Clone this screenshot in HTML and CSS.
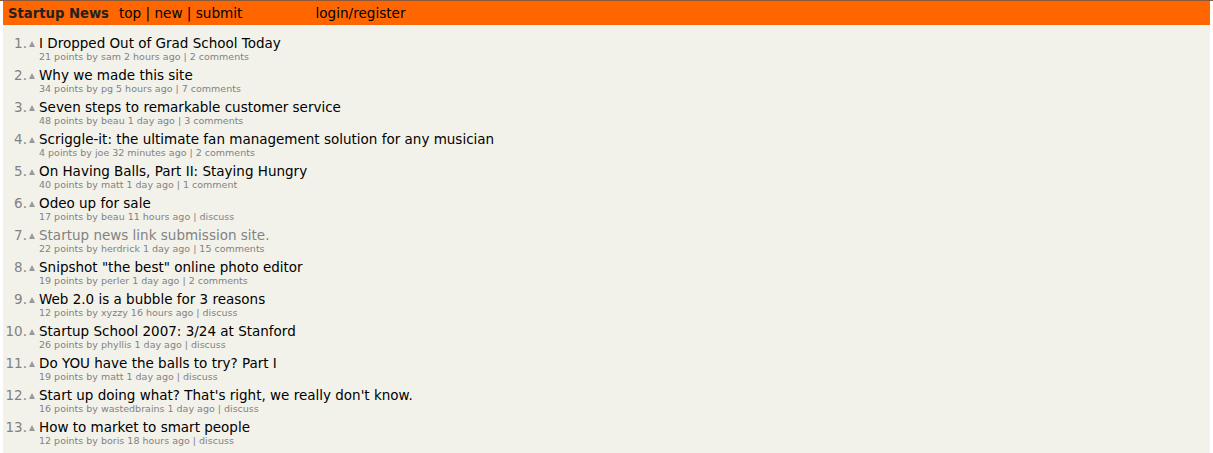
FILE: index.html
```html
<!DOCTYPE html>
<html>
<head>
<meta charset="utf-8">
<link rel="stylesheet" href="styles.css">
</head>
<body>
<div class="page">
  <div class="topbar">
    <span class="brand">Startup News</span>
    <span class="nav">top | new | submit</span>
    <span class="login">login/register</span>
  </div>
  <div class="list">
    <div class="item"><span class="rank">1.</span><span class="vote"></span><div class="body"><div class="title">I Dropped Out of Grad School Today</div><div class="sub">21 points by sam 2 hours ago | 2 comments</div></div></div>
    <div class="item"><span class="rank">2.</span><span class="vote"></span><div class="body"><div class="title">Why we made this site</div><div class="sub">34 points by pg 5 hours ago | 7 comments</div></div></div>
    <div class="item"><span class="rank">3.</span><span class="vote"></span><div class="body"><div class="title">Seven steps to remarkable customer service</div><div class="sub">48 points by beau 1 day ago | 3 comments</div></div></div>
    <div class="item"><span class="rank">4.</span><span class="vote"></span><div class="body"><div class="title">Scriggle-it: the ultimate fan management solution for any musician</div><div class="sub">4 points by joe 32 minutes ago | 2 comments</div></div></div>
    <div class="item"><span class="rank">5.</span><span class="vote"></span><div class="body"><div class="title">On Having Balls, Part II: Staying Hungry</div><div class="sub">40 points by matt 1 day ago | 1 comment</div></div></div>
    <div class="item"><span class="rank">6.</span><span class="vote"></span><div class="body"><div class="title">Odeo up for sale</div><div class="sub">17 points by beau 11 hours ago | discuss</div></div></div>
    <div class="item"><span class="rank">7.</span><span class="vote"></span><div class="body"><div class="title visited">Startup news link submission site.</div><div class="sub">22 points by herdrick 1 day ago | 15 comments</div></div></div>
    <div class="item"><span class="rank">8.</span><span class="vote"></span><div class="body"><div class="title">Snipshot "the best" online photo editor</div><div class="sub">19 points by perler 1 day ago | 2 comments</div></div></div>
    <div class="item"><span class="rank">9.</span><span class="vote"></span><div class="body"><div class="title">Web 2.0 is a bubble for 3 reasons</div><div class="sub">12 points by xyzzy 16 hours ago | discuss</div></div></div>
    <div class="item"><span class="rank">10.</span><span class="vote"></span><div class="body"><div class="title">Startup School 2007: 3/24 at Stanford</div><div class="sub">26 points by phyllis 1 day ago | discuss</div></div></div>
    <div class="item"><span class="rank">11.</span><span class="vote"></span><div class="body"><div class="title">Do YOU have the balls to try? Part I</div><div class="sub">19 points by matt 1 day ago | discuss</div></div></div>
    <div class="item"><span class="rank">12.</span><span class="vote"></span><div class="body"><div class="title">Start up doing what? That's right, we really don't know.</div><div class="sub">16 points by wastedbrains 1 day ago | discuss</div></div></div>
    <div class="item"><span class="rank">13.</span><span class="vote"></span><div class="body"><div class="title">How to market to smart people</div><div class="sub">12 points by boris 18 hours ago | discuss</div></div></div>
  </div>
</div>
</body>
</html>
```

FILE: styles.css
```css
html, body {
  margin: 0;
  padding: 0;
  background: #ffffff;
}
body {
  font-family: "DejaVu Sans", Verdana, sans-serif;
  border-top: 1px solid #8a5a3a;
}
.page {
  margin: 0 3px;
  background: #f3f2ea;
  min-height: 452px;
}
.topbar {
  background: #ff6600;
  height: 24px;
  display: flex;
  align-items: center;
  padding-left: 5px;
  font-size: 13.6px;
  color: #000;
}
.brand {
  font-weight: bold;
  font-size: 13.2px;
  color: #222;
}
.nav {
  margin-left: 10px;
}
.login {
  margin-left: 73px;
}
.list {
  padding-top: 10px;
}
.item {
  display: flex;
  align-items: flex-start;
  height: 32px;
}
.rank {
  width: 24px;
  text-align: right;
  font-size: 13.5px;
  color: #828282;
  line-height: 16px;
}
.vote {
  width: 0;
  height: 0;
  border-left: 3px solid transparent;
  border-right: 3px solid transparent;
  border-bottom: 6px solid #9a9a9a;
  margin: 6px 4px 0 2px;
}
.body {
  display: flex;
  flex-direction: column;
}
.title {
  font-size: 13.5px;
  line-height: 16px;
  color: #000;
}
.title.visited {
  color: #828282;
}
.sub {
  font-size: 9.5px;
  line-height: 11px;
  color: #828282;
}
```
